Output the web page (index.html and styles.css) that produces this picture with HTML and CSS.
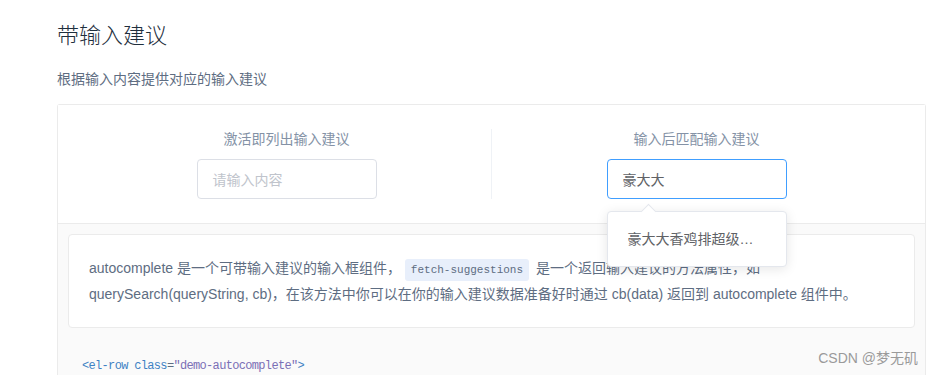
FILE: index.html
```html
<!DOCTYPE html>
<html lang="zh-CN">
<head>
<meta charset="utf-8">
<title>带输入建议</title>
<link rel="stylesheet" href="styles.css">
</head>
<body>
<div class="page">
  <h3 class="title">带输入建议</h3>
  <p class="subtitle">根据输入内容提供对应的输入建议</p>
  <div class="demo-block">
    <div class="source">
      <div class="col col-left">
        <div class="sub-title">激活即列出输入建议</div>
        <div class="input"><span class="placeholder">请输入内容</span></div>
      </div>
      <div class="col">
        <div class="sub-title">输入后匹配输入建议</div>
        <div class="input-wrap">
          <div class="input is-focus"><span class="value">豪大大</span></div>
          <div class="popper">
            <span class="arrow"></span>
            <ul class="suggestions">
              <li class="item">豪大大香鸡排超级奶爸</li>
            </ul>
          </div>
        </div>
      </div>
    </div>
    <div class="meta">
      <div class="description">autocomplete 是一个可带输入建议的输入框组件， <code class="inline-code">fetch-suggestions</code> 是一个返回输入建议的方法属性，如 querySearch(queryString, cb)，在该方法中你可以在你的输入建议数据准备好时通过 cb(data) 返回到 autocomplete 组件中。</div>
      <pre class="code"><span class="tag">&lt;el-row</span> <span class="attr">class</span>=<span class="str">"demo-autocomplete"</span><span class="tag">&gt;</span></pre>
    </div>
  </div>
</div>
<div class="watermark">CSDN @梦无矶</div>
</body>
</html>
```
FILE: styles.css
```css
html, body {
  margin: 0;
  padding: 0;
  height: 100%;
  overflow: hidden;
  background: #fff;
}
body {
  font-family: "Liberation Sans", "Noto Sans CJK SC", sans-serif;
  color: #5e6d82;
  position: relative;
}
.page {
  padding: 21px 7px 0 57px;
}
.title {
  margin: 0;
  font-size: 22px;
  font-weight: 300;
  line-height: 30px;
  color: #1f2f3d;
}
.subtitle {
  margin: 17px 0 0;
  font-size: 14px;
  line-height: 22px;
  color: #5e6d82;
}
.demo-block {
  margin-top: 14px;
  border: 1px solid #ebebeb;
  border-bottom: 0;
  border-radius: 3px 3px 0 0;
}
.source {
  display: flex;
  padding: 24px;
  border-bottom: 1px solid #ebebeb;
  background: #fff;
}
.col {
  flex: 1;
  display: flex;
  flex-direction: column;
  align-items: center;
}
.col-left {
  border-right: 1px solid #eff2f6;
}
.sub-title {
  font-size: 14px;
  line-height: 20px;
  color: #8492a6;
  margin-bottom: 10px;
}
.input-wrap {
  position: relative;
  z-index: 2;
}
.input {
  box-sizing: border-box;
  width: 180px;
  height: 40px;
  border: 1px solid #dcdfe6;
  border-radius: 4px;
  padding: 0 15px;
  display: flex;
  align-items: center;
  font-size: 14px;
  background: #fff;
}
.input.is-focus {
  border-color: #409eff;
}
.placeholder {
  color: #c0c4cc;
}
.value {
  color: #606266;
}
.popper {
  position: absolute;
  top: 52px;
  left: 0;
  box-sizing: border-box;
  width: 180px;
  background: #fff;
  border: 1px solid #e4e7ed;
  border-radius: 4px;
  box-shadow: 0 2px 12px rgba(0, 0, 0, 0.1);
}
.arrow {
  position: absolute;
  top: -6px;
  left: 35px;
  width: 10px;
  height: 10px;
  background: #fff;
  border-left: 1px solid #e4e7ed;
  border-top: 1px solid #e4e7ed;
  transform: rotate(45deg);
}
.suggestions {
  position: relative;
  list-style: none;
  margin: 0;
  padding: 10px 0;
}
.item {
  padding: 0 25px 0 20px;
  line-height: 34px;
  font-size: 14px;
  color: #606266;
  white-space: nowrap;
  overflow: hidden;
  text-overflow: ellipsis;
}
.meta {
  box-sizing: border-box;
  background: #fafafa;
  padding-top: 10px;
  height: 151px;
  overflow: hidden;
}
.description {
  margin: 0 10px;
  box-sizing: border-box;
  padding: 20px;
  background: #fff;
  border: 1px solid #ebebeb;
  border-radius: 4px;
  font-size: 14px;
  line-height: 26px;
  color: #5e6d82;
}
.inline-code {
  display: inline-block;
  font-family: "Liberation Mono", monospace;
  font-size: 11px;
  line-height: 22px;
  padding: 0 6px;
  margin: 0 3px 0 0;
  background: #e8effb;
  color: #5e6d82;
  border-radius: 3px;
  vertical-align: 0;
}
.code {
  margin: 0;
  padding: 28px 24px 0;
  font-family: "Liberation Mono", monospace;
  font-size: 12px;
  letter-spacing: -0.67px;
  line-height: 21.6px;
  color: #5e6d82;
}
.tag, .attr {
  color: #3e82c4;
}
.str {
  color: #7a6fb6;
}
.watermark {
  position: absolute;
  right: 15px;
  top: 348px;
  font-size: 14px;
  line-height: 20px;
  color: #9a9a9a;
}
```
